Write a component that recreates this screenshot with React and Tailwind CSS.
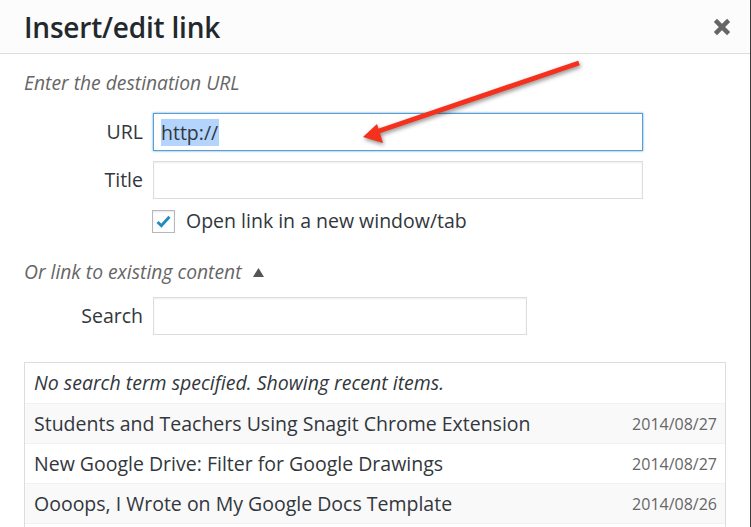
import React from 'react';

const items = [
  { title: 'Students and Teachers Using Snagit Chrome Extension', date: '2014/08/27' },
  { title: 'New Google Drive: Filter for Google Drawings', date: '2014/08/27' },
  { title: 'Oooops, I Wrote on My Google Docs Template', date: '2014/08/26' },
];

export default function App() {
  return (
    <div className="w-[751px] h-[527px] overflow-hidden flex bg-white text-[#32373c]" style={{ fontFamily: '"Open Sans", "Liberation Sans", sans-serif' }}>
      <div className="relative w-[750px] h-full flex flex-col bg-white">
        {/* header */}
        <div className="h-[54px] shrink-0 flex items-center justify-between pl-6 pr-[17px] bg-[#fcfcfc] border-b border-[#dddddd]">
          <h1 className="text-[28px] font-semibold text-[#23282d] leading-none tracking-[-0.2px]">Insert/edit link</h1>
          <svg width="22" height="22" viewBox="0 0 20 20" className="text-[#666]">
            <path d="M4 4 L16 16 M16 4 L4 16" stroke="currentColor" strokeWidth="4" strokeLinecap="butt" />
          </svg>
        </div>

        {/* body */}
        <div className="px-6 pt-[17px] flex flex-col">
          <p className="italic text-[#666] text-[19.3px] leading-6">Enter the destination URL</p>

          <div className="mt-[18px] flex items-center gap-[10px]">
            <label className="w-[119px] text-right text-[19.5px]">URL</label>
            <div className="w-[490px] h-[38px] border border-[#5b9dd9] shadow-[0_0_2px_rgba(30,140,190,0.8)] flex items-center pl-[7px]">
              <span className="bg-[#b3d4fc] text-[19.5px] leading-[27px] pr-[1px]">http://</span>
            </div>
          </div>

          <div className="mt-[10px] flex items-center gap-[10px]">
            <label className="w-[119px] text-right text-[19.5px]">Title</label>
            <div className="w-[490px] h-[38px] border border-[#dddddd] shadow-[inset_0_1px_2px_rgba(0,0,0,0.07)]"></div>
          </div>

          <div className="mt-[10px] pl-[128px] flex items-center gap-[11px]">
            <span className="w-[23px] h-[23px] border border-[#b4b9be] bg-white shadow-[inset_0_1px_2px_rgba(0,0,0,0.1)] flex items-center justify-center">
              <svg width="17" height="17" viewBox="0 0 20 20">
                <path d="M3 10.5 L7.5 15 L17 4.5" fill="none" stroke="#1e8cbe" strokeWidth="3.4" />
              </svg>
            </span>
            <span className="text-[19.5px] leading-6">Open link in a new window/tab</span>
          </div>

          <div className="mt-[27px] flex items-center gap-[11px]">
            <span className="italic text-[#666] text-[19.3px] leading-6">Or link to existing content</span>
            <svg width="11" height="9" viewBox="0 0 11 9">
              <path d="M5.5 0 L11 9 L0 9 Z" fill="#555" />
            </svg>
          </div>

          <div className="mt-[13px] flex items-center gap-[10px]">
            <label className="w-[119px] text-right text-[19.5px]">Search</label>
            <div className="w-[374px] h-[38px] border border-[#dddddd] shadow-[inset_0_1px_2px_rgba(0,0,0,0.07)]"></div>
          </div>

          <div className="mt-[27px] h-[200px] border border-[#dddddd] border-b-0">
            <div className="h-[40px] flex items-center px-[9px] italic text-[19.5px]">
              No search term specified. Showing recent items.
            </div>
            {items.map((it, i) => (
              <div key={i} className={`h-[40px] flex items-center justify-between pl-[9px] pr-2 border-t border-[#f1f1f1] ${i % 2 === 0 ? 'bg-[#f9f9f9]' : 'bg-white'}`}>
                <span className="text-[19.5px]">{it.title}</span>
                <span className="text-[16px] text-[#666]">{it.date}</span>
              </div>
            ))}
            <div className="h-[40px] border-t border-[#f1f1f1] bg-white"></div>
          </div>
        </div>

        {/* red annotation arrow */}
        <svg className="absolute left-0 top-0 pointer-events-none" width="750" height="527" viewBox="0 0 750 527" style={{ filter: 'drop-shadow(1px 2px 2px rgba(0,0,0,0.45))' }}>
          <line x1="579" y1="63" x2="376" y2="132" stroke="#f5301c" strokeWidth="5" />
          <polygon points="363,137 377,124 383,143" fill="#f5301c" />
        </svg>
      </div>
      <div className="w-px h-full bg-[#3a3a3a]"></div>
    </div>
  );
}
